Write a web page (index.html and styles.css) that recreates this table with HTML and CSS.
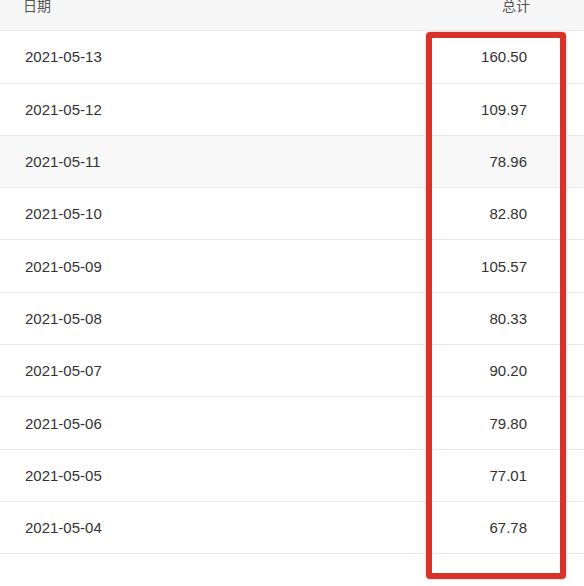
FILE: index.html
```html
<!DOCTYPE html>
<html lang="zh-CN">
<head>
    <meta charset="UTF-8">
    <meta name="viewport" content="width=device-width, initial-scale=1.0">
    <title>每日总计</title>
    <link rel="stylesheet" href="styles.css">
</head>
<body>
    <div class="table-wrap">
        <div class="row head">
            <div class="cell">日期</div>
            <div class="cell num">总计</div>
        </div>
        <div class="row">
            <div class="cell">2021-05-13</div>
            <div class="cell num">160.50</div>
        </div>
        <div class="row">
            <div class="cell">2021-05-12</div>
            <div class="cell num">109.97</div>
        </div>
        <div class="row hover">
            <div class="cell">2021-05-11</div>
            <div class="cell num">78.96</div>
        </div>
        <div class="row">
            <div class="cell">2021-05-10</div>
            <div class="cell num">82.80</div>
        </div>
        <div class="row">
            <div class="cell">2021-05-09</div>
            <div class="cell num">105.57</div>
        </div>
        <div class="row">
            <div class="cell">2021-05-08</div>
            <div class="cell num">80.33</div>
        </div>
        <div class="row">
            <div class="cell">2021-05-07</div>
            <div class="cell num">90.20</div>
        </div>
        <div class="row">
            <div class="cell">2021-05-06</div>
            <div class="cell num">79.80</div>
        </div>
        <div class="row">
            <div class="cell">2021-05-05</div>
            <div class="cell num">77.01</div>
        </div>
        <div class="row">
            <div class="cell">2021-05-04</div>
            <div class="cell num">67.78</div>
        </div>

        <!-- 标注框 -->
        <div class="mark"></div>
    </div>
</body>
</html>
```

FILE: styles.css
```css
html, body {
    height: 100%;
}

body {
    margin: 0;
    background: #fff;
    font-family: "Liberation Sans", "Noto Sans CJK SC", sans-serif;
    color: #333;
    overflow: hidden;
}

.table-wrap {
    position: relative;
    margin-top: -21px;
    padding-bottom: 60px;
}

.row {
    display: flex;
    justify-content: space-between;
    align-items: center;
    height: 52.3px;
    box-sizing: border-box;
    padding: 0 57px 0 25px;
    border-bottom: 1px solid #e9e9e9;
    font-size: 15px;
}

.row.head {
    background: #f7f7f7;
    color: #555;
    font-size: 14px;
    padding-left: 23px;
    padding-right: 54px;
}

.row.hover {
    background: #f8f8f8;
}

.cell.num {
    text-align: right;
}

.mark {
    position: absolute;
    left: 426px;
    top: 53px;
    width: 140px;
    height: 547px;
    box-sizing: border-box;
    border: 6px solid #d8322b;
    border-radius: 4px;
    box-shadow: 0 0 2px rgba(216, 50, 43, 0.5);
}
```
